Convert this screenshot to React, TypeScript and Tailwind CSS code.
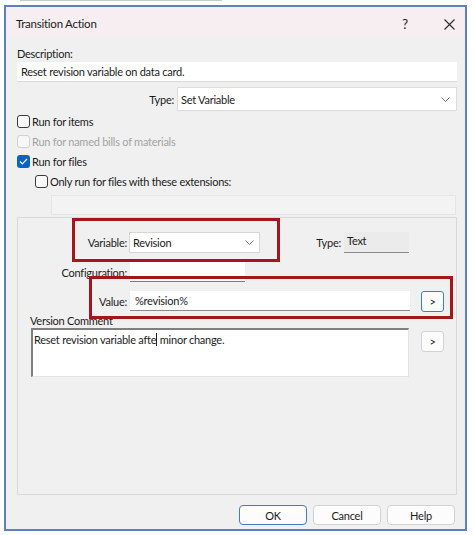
import React from "react";

function Chevron() {
  return (
    <svg width="9" height="5" viewBox="0 0 9 5" className="shrink-0">
      <path d="M0.5 0.5 L4.5 4.5 L8.5 0.5" fill="none" stroke="#777777" strokeWidth="1" />
    </svg>
  );
}

function CheckBox({ checked, disabled }: { checked?: boolean; disabled?: boolean }) {
  if (checked) {
    return (
      <span className="w-[13px] h-[13px] rounded-[3px] bg-[#0a64c2] flex items-center justify-center shrink-0">
        <svg width="9" height="7" viewBox="0 0 9 7">
          <path d="M1 3.5 L3.3 5.8 L8 1" fill="none" stroke="#ffffff" strokeWidth="1.2" />
        </svg>
      </span>
    );
  }
  return (
    <span
      className={
        disabled
          ? "w-[13px] h-[13px] rounded-[3px] border border-[#d2d2d2] bg-[#f7f7f7] shrink-0"
          : "w-[13px] h-[13px] rounded-[3px] border border-[#3b3b3b] bg-[#f9f9f9] shrink-0"
      }
    />
  );
}

function Row({ children, indent }: { children: React.ReactNode; indent?: boolean }) {
  return (
    <div className={indent ? "h-[20px] flex items-center gap-[2px] pl-[18px]" : "h-[20px] flex items-center gap-[2px]"}>
      {children}
    </div>
  );
}

export default function App() {
  return (
    <div className="w-[474px] h-[535px] bg-white pl-[4px] font-['Lato',sans-serif] text-[11px] tracking-[-0.25px] text-[#1b1b1b] leading-none">
      <div className="h-[5px] flex items-start pl-[16px]">
        <div className="w-[202px] h-[1px] bg-[#c9c9c9]" />
      </div>
      <div className="w-[463px] h-[526px] border-2 border-[#5f80c0] bg-[#f0f0f0] flex flex-col">
        {/* title bar */}
        <div className="h-[30px] pt-[4px] bg-[#f6eef0] flex items-center pl-[10px] pr-[10px] text-[11.5px]">
          <span className="flex-1">Transition Action</span>
          <span className="w-[10px] text-center mr-[34px] text-[13px]">?</span>
          <svg width="11" height="11" viewBox="0 0 11 11">
            <path d="M0.5 0.5 L10.5 10.5 M10.5 0.5 L0.5 10.5" stroke="#2b2b2b" strokeWidth="1.1" />
          </svg>
        </div>

        <div className="pl-[11px] pr-[8px] flex flex-col">
          <div className="h-[16px] mt-[8px] flex items-center">Description:</div>
          <div className="h-[20px] mt-[1px] bg-white border-b border-[#d9d9d9] flex items-center pl-[4px]">
            Reset revision variable on data card.
          </div>

          <div className="h-[24px] mt-[5px] flex items-center justify-end">
            <span className="mr-[3px]">Type:</span>
            <div className="w-[280px] h-[24px] bg-white border border-[#dcdcdc] flex items-center pl-[3px] pr-[6px]">
              <span className="flex-1">Set Variable</span>
              <Chevron />
            </div>
          </div>

          <Row>
            <CheckBox />
            <span>Run for items</span>
          </Row>
          <Row>
            <CheckBox disabled />
            <span className="text-[#a3a3a3]">Run for named bills of materials</span>
          </Row>
          <Row>
            <CheckBox checked />
            <span>Run for files</span>
          </Row>
          <Row indent>
            <CheckBox />
            <span>Only run for files with these extensions:</span>
          </Row>
          <div className="h-[20px] mt-[4px] ml-[34px] mr-[1px] bg-[#f3f3f3] border border-[#e6e6e6]" />

          {/* group */}
          <div className="relative h-[278px] mt-[2px] border border-[#d9d9d9] flex flex-col">
            <div className="h-[21px] mt-[14px] flex items-center">
              <span className="w-[109px] text-right">Variable:</span>
              <div className="w-[131px] h-[21px] ml-[2px] bg-white border border-[#d6d6d6] flex items-center pl-[3px] pr-[5px]">
                <span className="flex-1">Revision</span>
                <Chevron />
              </div>
              <span className="w-[81px] text-right">Type:</span>
              <div className="w-[65px] h-[21px] ml-[3px] bg-[#ebebeb] border-b border-[#8d8d8d] pl-[3px] pt-[3px]">Text</div>
            </div>

            <div className="h-[20px] mt-[9px] flex items-center">
              <span className="w-[109px] text-right">Configuration:</span>
              <div className="w-[115px] h-[20px] ml-[3px] bg-white border-b border-[#7d7d7d]" />
            </div>

            <div className="h-[20px] mt-[9px] flex items-center">
              <span className="w-[109px] text-right">Value:</span>
              <div className="w-[280px] h-[20px] ml-[3px] bg-white border-b border-[#8a8a8a] flex items-center pl-[5px]">
                %revision%
              </div>
              <button className="w-[23px] h-[21px] ml-[11px] rounded-[3px] border border-[#3d7dc4] bg-[#fbfbfb] flex items-center justify-center text-[11px]">
                &gt;
              </button>
            </div>

            <div className="h-[16px] mt-[1px] pl-[12px] flex items-center">Version Comment</div>

            <div className="flex items-start">
              <div className="w-[378px] h-[49px] ml-[13px] bg-white border-t-2 border-l-2 border-[#7f7f7f] border-b border-r border-b-[#e3e3e3] border-r-[#e3e3e3] pl-[1px] pt-[3px]">
                Reset revision variable afte
                <span className="inline-block w-[1px] h-[13px] bg-[#222] align-[-2px]" />
                {" "}minor change.
              </div>
              <button className="w-[23px] h-[21px] ml-[12px] mt-[3px] rounded-[3px] border border-[#d3d3d3] bg-[#fbfbfb] flex items-center justify-center text-[11px]">
                &gt;
              </button>
            </div>

            {/* annotation boxes */}
            <div className="absolute left-[54px] top-0 w-[208px] h-[44px] border-[3px] border-[#a3171c]" />
            <div className="absolute left-[71px] top-[58px] w-[364px] h-[43px] border-[3px] border-[#a3171c]" />
          </div>

          <div className="flex justify-end gap-[6px] mt-[10px] mr-[2px]">
            <button className="w-[68px] h-[20px] rounded-[4px] border border-[#3f7dc3] bg-[#fcfcfc] text-[11px]">OK</button>
            <button className="w-[68px] h-[20px] rounded-[4px] border border-[#d2d2d2] bg-[#fcfcfc] text-[11px]">Cancel</button>
            <button className="w-[68px] h-[20px] rounded-[4px] border border-[#d2d2d2] bg-[#fcfcfc] text-[11px]">Help</button>
          </div>
        </div>
      </div>
    </div>
  );
}
